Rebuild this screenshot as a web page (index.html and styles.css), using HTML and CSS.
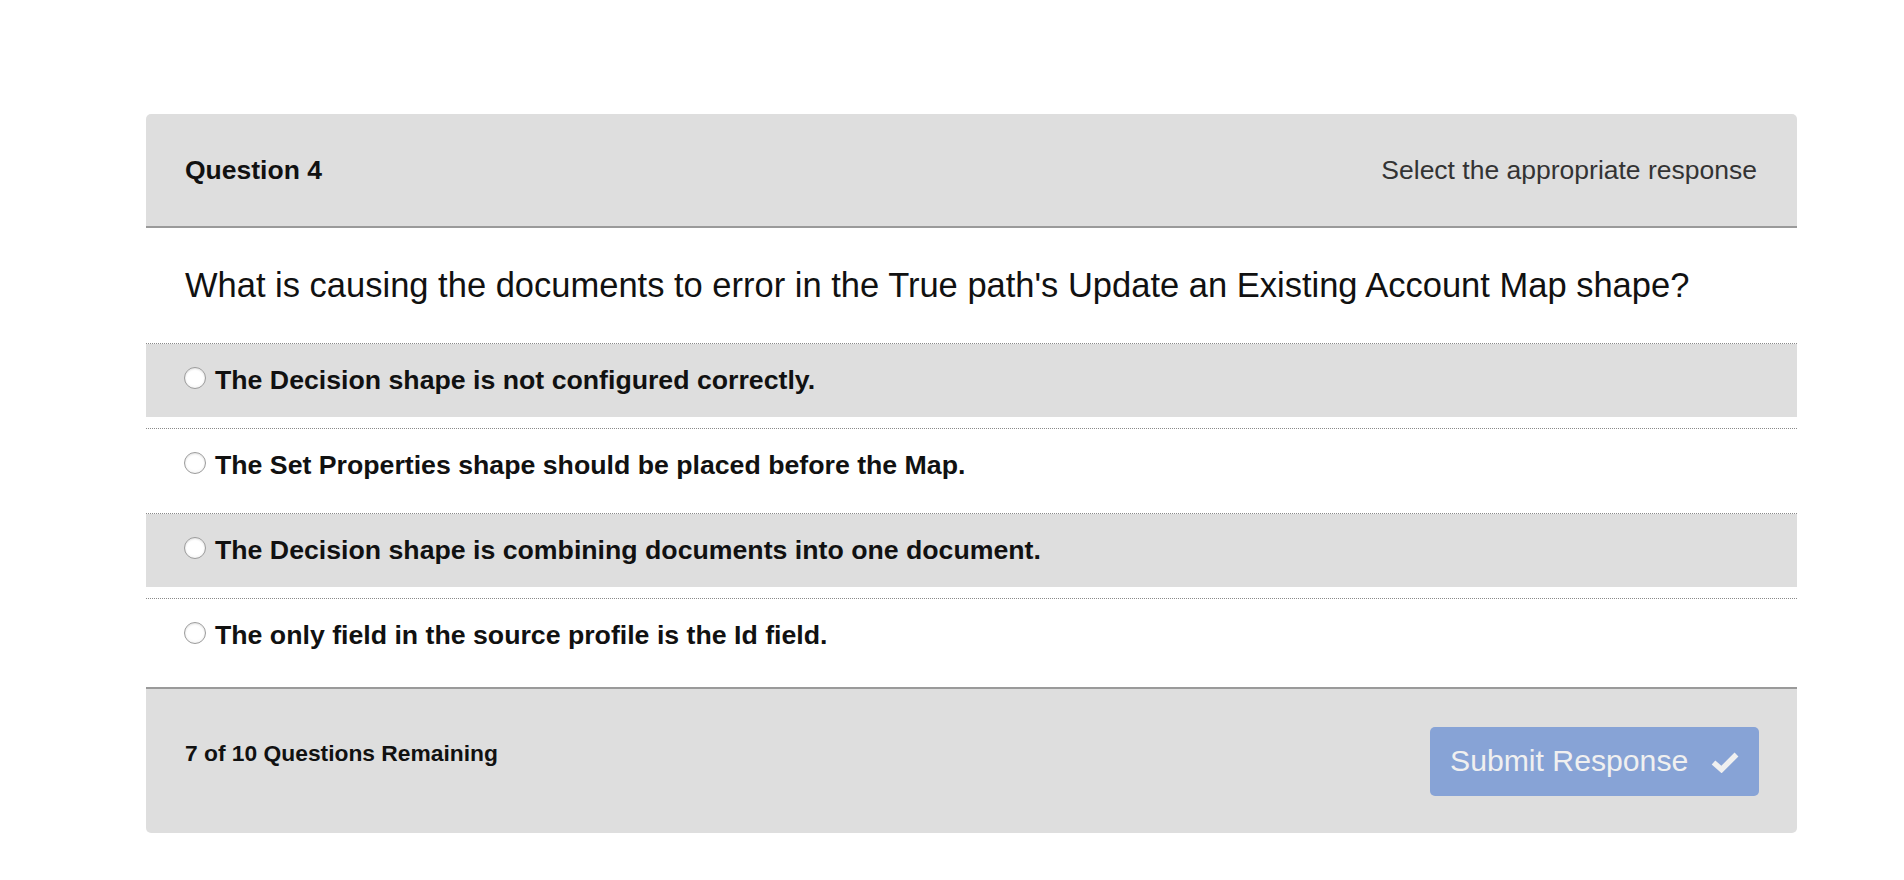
FILE: index.html
```html
<!DOCTYPE html>
<html lang="en">
<head>
<meta charset="utf-8">
<title>Question 4</title>
<link rel="stylesheet" href="styles.css">
</head>
<body>
<div class="page">
  <div class="card">
    <div class="card-header">
      <span class="q-num">Question 4</span>
      <span class="q-hint">Select the appropriate response</span>
    </div>
    <div class="question">What is causing the documents to error in the True path's Update an Existing Account Map shape?</div>
    <ul class="options">
      <li class="option shaded"><label class="opt-label"><span class="radio"></span><span class="opt-text">The Decision shape is not configured correctly.</span></label></li>
      <li class="option"><label class="opt-label"><span class="radio"></span><span class="opt-text">The Set Properties shape should be placed before the Map.</span></label></li>
      <li class="option shaded"><label class="opt-label"><span class="radio"></span><span class="opt-text">The Decision shape is combining documents into one document.</span></label></li>
      <li class="option"><label class="opt-label"><span class="radio"></span><span class="opt-text">The only field in the source profile is the Id field.</span></label></li>
    </ul>
    <div class="card-footer">
      <span class="remaining">7 of 10 Questions Remaining</span>
      <button class="submit" type="button"><span class="submit-text">Submit Response</span><svg class="check" width="28" height="22" viewBox="0 0 28 22"><polyline points="2.5,11.5 10.5,18.5 25.5,3.5" fill="none" stroke="#f0f0f0" stroke-width="5.5" stroke-linejoin="miter" stroke-linecap="butt"/></svg></button>
    </div>
  </div>
</div>
</body>
</html>
```
FILE: styles.css
```css
* { box-sizing: border-box; }
html, body { margin: 0; padding: 0; background: #ffffff; }
body { font-family: "Liberation Sans", Arial, Helvetica, sans-serif; color: #111; }

.page { padding: 114px 0 0 146px; }

.card {
  width: 1651px;
  border-radius: 5px;
  overflow: hidden;
  background: #ffffff;
}

.card-header {
  height: 114px;
  background: #dedede;
  border-bottom: 2px solid #9a9a9a;
  display: flex;
  align-items: center;
  justify-content: space-between;
  padding: 0 40px 0 39px;
}
.q-num { font-size: 26.5px; font-weight: bold; color: #111; }
.q-hint { font-size: 26.5px; color: #333; }

.question {
  height: 115px;
  display: flex;
  align-items: center;
  padding: 0 39px;
  font-size: 34.5px;
  color: #111;
}

.options { list-style: none; margin: 0; padding: 0 0 4px 0; }
.option { border-top: 1px dotted #8a8a8a; margin-bottom: 11px; }
.option.shaded .opt-label { background: #dedede; }
.opt-label {
  height: 73px;
  display: flex;
  align-items: center;
  padding: 0 38px;
}
.radio {
  flex: none;
  width: 22px;
  height: 22px;
  border-radius: 50%;
  border: 1px solid #9c9c9c;
  background: radial-gradient(circle at 50% 40%, #ffffff 55%, #ececec 100%);
  box-shadow: inset 0 1px 2px rgba(0,0,0,0.12);
  margin: -6px 9px 0 0;
}
.opt-text { font-size: 26.7px; font-weight: bold; color: #111; }

.card-footer {
  height: 146px;
  background: #dedede;
  border-top: 2px solid #9a9a9a;
  display: flex;
  align-items: center;
  justify-content: space-between;
  padding: 0 38px 0 39px;
}
.remaining { font-size: 22.8px; font-weight: bold; color: #111; margin-top: -16px; }

.submit {
  width: 329px;
  height: 69px;
  border: none;
  border-radius: 5px;
  background: #87a3d6;
  color: #f0f0f0;
  font-family: "Liberation Sans", Arial, Helvetica, sans-serif;
  font-size: 30.2px;
  display: flex;
  align-items: center;
  justify-content: flex-start;
  padding: 0 20px;
  gap: 23px;
  white-space: nowrap;
  cursor: pointer;
}
.submit-text { white-space: nowrap; }
.check { flex: none; margin-top: 1px; }
```
